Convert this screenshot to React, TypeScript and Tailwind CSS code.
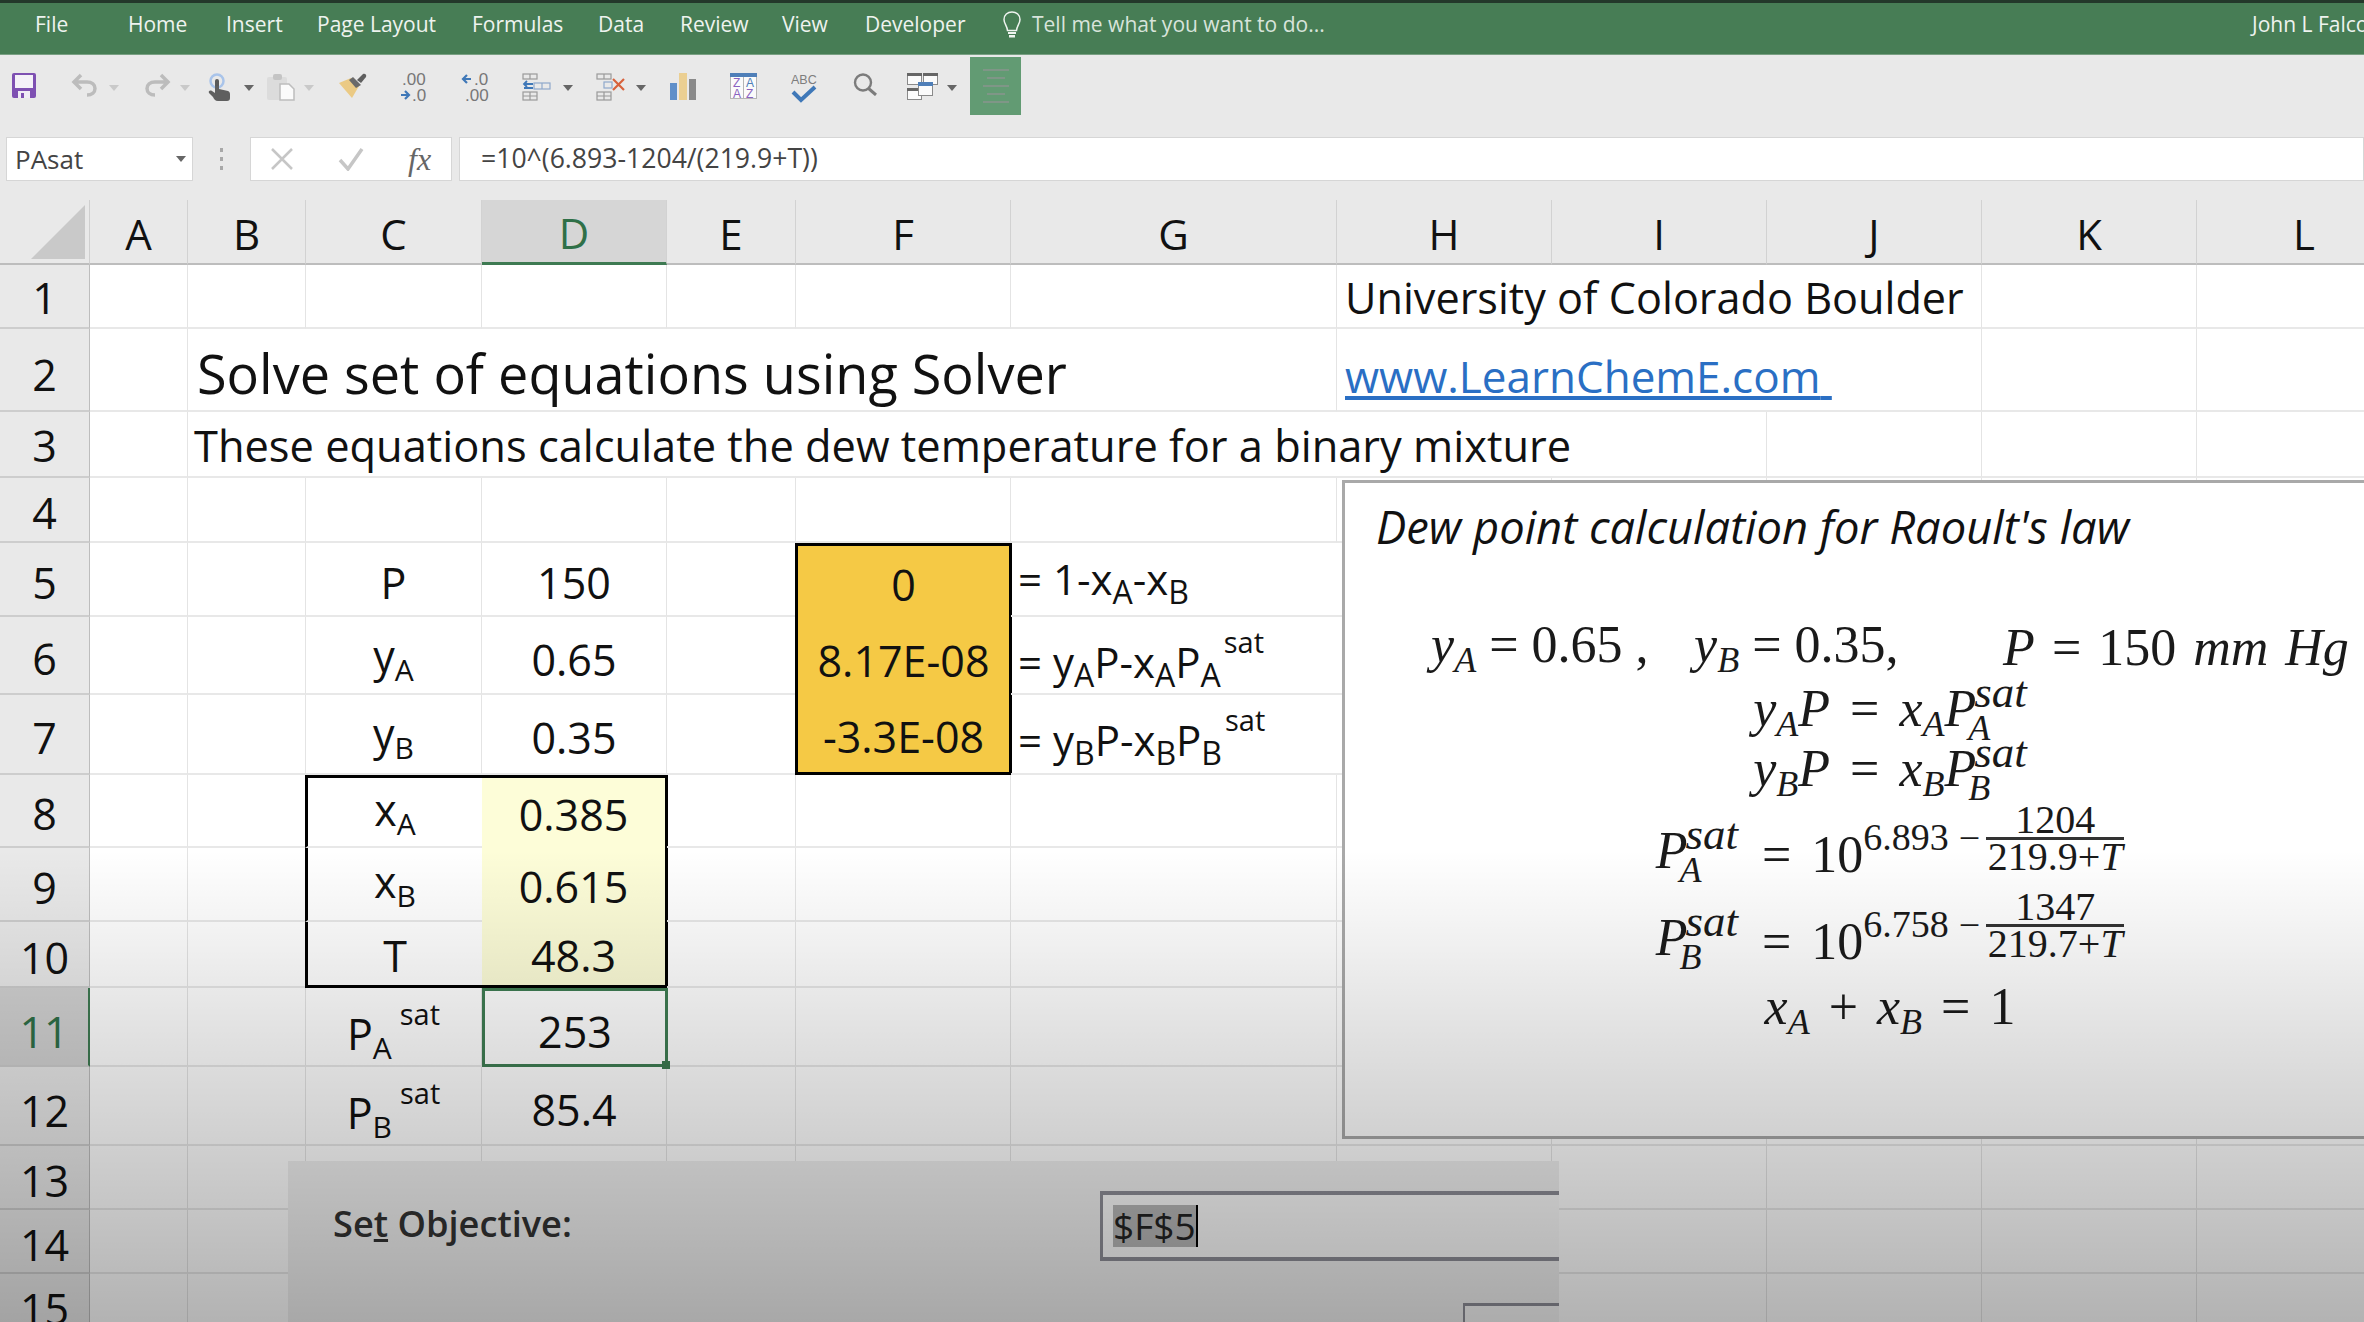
import React from "react";
import { twMerge } from "tailwind-merge";

const Arrow = ({ dark, x }: { dark?: boolean; x: string }) => (
  <svg width="12" height="8" viewBox="0 0 12 8" className={x}>
    <path d="M1 1h10L6 7z" fill={dark ? "#666" : "#c9c9c9"} />
  </svg>
);

const Save = () => (
  <svg width="24" height="25" viewBox="0 0 24 25" className="ml-[12px]">
    <rect width="24" height="25" rx="2" fill="#7e50b2" />
    <rect x="3" y="2" width="18" height="13" fill="#f4f1f8" />
    <rect x="6" y="18" width="12" height="7" fill="#f0ecf6" />
    <rect x="9" y="20" width="3" height="5" fill="#7e50b2" />
  </svg>
);
const Undo = ({ flip, x }: { flip?: boolean; x: string }) => (
  <svg width="27" height="24" viewBox="0 0 27 24" className={twMerge(x, flip ? "-scale-x-100" : "")}>
    <path d="M10 2 3 9l7 7M3 9h13c5 0 8 3 8 6.500s-3 6.500-8 6.500" fill="none" stroke="#bcbcbc" strokeWidth="3.500" />
  </svg>
);
const Hand = () => (
  <svg width="24" height="28" viewBox="0 0 24 28" className="ml-[16px]">
    <circle cx="10" cy="8" r="6.500" fill="none" stroke="#a9c4ea" strokeWidth="2.500" />
    <rect x="8" y="6" width="4" height="12" rx="2" fill="#5a5a5a" />
    <path d="M8 13h4v3l9 2c2 1 2 2 2 4v3c0 2-1 3-3 3h-9c-3 0-4-2-5-4l-4-4c-1-2 1-3 3-2l3 2z" fill="#5f5f5f" />
  </svg>
);
const Paste = () => (
  <svg width="28" height="28" viewBox="0 0 28 28" className="ml-[12px]">
    <rect x="0" y="4" width="20" height="23" rx="2" fill="#dcdcdc" />
    <rect x="6" y="1" width="9" height="6" rx="2" fill="#c4c4c4" />
    <path d="M13 11h9l5 5v11H13z" fill="#fbfbfb" stroke="#bdbdbd" strokeWidth="1.500" />
  </svg>
);
const Brush = () => (
  <svg width="30" height="26" viewBox="0 0 30 26" className="ml-[23px]">
    <path d="M1 10 13 5l8 8-7 12z" fill="#ebca84" />
    <path d="M15 4 23 12 18 15 11 7z" fill="#6a6a6a" />
    <path d="M19 7l6-6c2-1 4 1 3 3l-5 6z" fill="#5f5f5f" />
  </svg>
);
const Dec = ({ inc }: { inc?: boolean }) => (
  <svg width="28" height="28" viewBox="0 0 28 28" className={inc ? "ml-[33px]" : "ml-[32px]"}>
    {inc ? (
      <>
        <path d="M10 6H2m4-4L2 6l4 4" fill="none" stroke="#3f78b8" strokeWidth="2.200" />
        <text x="13" y="12" fontSize="17" fill="#777" fontFamily="Liberation Sans">.0</text>
        <text x="4" y="28" fontSize="17" fill="#777" fontFamily="Liberation Sans">.00</text>
      </>
    ) : (
      <>
        <text x="2" y="12" fontSize="17" fill="#777" fontFamily="Liberation Sans">.00</text>
        <path d="M1 22h8m-4-4 4 4-4 4" fill="none" stroke="#3f78b8" strokeWidth="2.200" />
        <text x="12" y="28" fontSize="17" fill="#777" fontFamily="Liberation Sans">.0</text>
      </>
    )}
  </svg>
);
const CellsIcon = ({ del, x }: { del?: boolean; x: string }) => (
  <svg width="30" height="28" viewBox="0 0 30 28" className={x}>
    <g fill="none" stroke="#9a9a9a" strokeWidth="1.200">
      <rect x="1" y="1" width="14" height="5" />
      <path d="M8 1v5" />
      <rect x="1" y="19" width="14" height="8" />
      <path d="M8 19v8M1 23h14" />
      {del ? <rect x="8" y="9" width="8" height="6" stroke="#8fa9cc" /> : <rect x="12" y="10" width="16" height="6" stroke="#8fa9cc" />}
      {!del && <path d="M20 10v6" stroke="#8fa9cc" />}
    </g>
    {del ? (
      <path d="M17 6l11 11M28 6 17 17" stroke="#d8623c" strokeWidth="2.200" />
    ) : (
      <path d="M11 11H2m3-3-3 3 3 3M11 15H2" fill="none" stroke="#3f78b8" strokeWidth="1.800" />
    )}
  </svg>
);
const Chart = () => (
  <svg width="26" height="27" viewBox="0 0 26 27" className="ml-[23px]">
    <rect x="0" y="10" width="7" height="17" fill="#5f8fc9" />
    <rect x="9" y="0" width="8" height="27" fill="#ebcf92" />
    <rect x="19" y="6" width="7" height="21" fill="#8a8a8a" />
  </svg>
);
const Sort = () => (
  <svg width="27" height="26" viewBox="0 0 27 26" className="ml-[34px]">
    <rect x="0.500" y="0.500" width="26" height="25" fill="#fbfbfb" stroke="#b5b5b5" />
    <rect width="27" height="4" fill="#4f7fb8" />
    <path d="M13.500 4v22" stroke="#b5b5b5" />
    <text x="3" y="14" fontSize="12" fill="#8a62c0" fontFamily="Liberation Sans">Z</text>
    <text x="3" y="25" fontSize="12" fill="#8a62c0" fontFamily="Liberation Sans">A</text>
    <text x="16" y="14" fontSize="12" fill="#4f7fb8" fontFamily="Liberation Sans">A</text>
    <text x="16" y="25" fontSize="12" fill="#8a62c0" fontFamily="Liberation Sans">Z</text>
  </svg>
);
const Spell = () => (
  <svg width="26" height="30" viewBox="0 0 26 30" className="ml-[34px]">
    <text x="0" y="11" fontSize="12.500" fill="#7d7d7d" fontFamily="Liberation Sans">ABC</text>
    <path d="M2 19l8 8L24 14" fill="none" stroke="#3f78b8" strokeWidth="4" />
  </svg>
);
const Search = () => (
  <svg width="24" height="23" viewBox="0 0 24 23" className="ml-[36px]">
    <circle cx="10" cy="9.500" r="8" fill="none" stroke="#7c7c7c" strokeWidth="2.400" />
    <path d="M15 15l8 7" stroke="#7c7c7c" strokeWidth="3" />
  </svg>
);
const Windows = () => (
  <svg width="31" height="27" viewBox="0 0 31 27" className="ml-[30px]">
    <rect x="0.500" y="0.500" width="14" height="11" fill="#fbfbfb" stroke="#8a8a8a" />
    <rect x="0" y="0" width="15" height="3" fill="#666" />
    <rect x="16.500" y="0.500" width="14" height="11" fill="#fbfbfb" stroke="#8a8a8a" />
    <rect x="16" y="0" width="15" height="3" fill="#666" />
    <rect x="0.500" y="15.500" width="14" height="11" fill="#fbfbfb" stroke="#8a8a8a" />
    <rect x="0" y="15" width="15" height="3" fill="#666" />
    <rect x="11.500" y="9.500" width="14" height="13" fill="#fbfbfb" stroke="#8a8a8a" />
    <rect x="11" y="9" width="15" height="4" fill="#4f7fb8" />
  </svg>
);

const Bulb = () => (
  <svg width="18" height="27" viewBox="0 0 18 27" className="shrink-0">
    <path d="M9 1c4.500 0 8 3 8 7.500 0 4-3 6-3.500 11h-9C4 14.500 1 12.500 1 8.500 1 4 4.500 1 9 1z" fill="none" stroke="#eef3ef" strokeWidth="1.500" />
    <path d="M5 21h8v2H5zM6 24h6v2.500H6z" fill="#eef3ef" />
  </svg>
);

const menu: [string, string][] = [
  ["File", "w-[128px] pl-[35px]"],
  ["Home", "w-[98px]"],
  ["Insert", "w-[91px]"],
  ["Page Layout", "w-[155px]"],
  ["Formulas", "w-[126px]"],
  ["Data", "w-[82px]"],
  ["Review", "w-[102px]"],
  ["View", "w-[83px]"],
  ["Developer", "w-[138px]"],
];

const S = ({ children }: { children: React.ReactNode }) => (
  <span className="text-[30px] align-[-9px]">{children}</span>
);
const S2 = ({ children }: { children: React.ReactNode }) => (
  <span className="text-[32px] align-[-9px]">{children}</span>
);
const Up = ({ children, cls }: { children: React.ReactNode; cls: string }) => (
  <span className={twMerge("text-[29px] align-[25px]", cls)}>{children}</span>
);

const cols = ["A", "B", "C", "D", "E", "F", "G", "H", "I", "J", "K", "L"];
const rowsN = Array.from({ length: 15 }, (_, i) => i + 1);

const Q = "border-r-0";
const BLK = "border-black";
const cells: Record<string, { c?: React.ReactNode; cls?: string }> = {
  B2: {
    c: <span className="text-[54px]">Solve set of equations using Solver</span>,
    cls: "justify-start pl-[9px] border-r-0",
  },
  C2: { cls: Q }, D2: { cls: Q }, E2: { cls: Q }, F2: { cls: Q },
  B3: {
    c: <span className="text-[43.400px]">These equations calculate the dew temperature for a binary mixture</span>,
    cls: "justify-start pl-[6px] pt-[3px] border-r-0",
  },
  C3: { cls: Q }, D3: { cls: Q }, E3: { cls: Q }, F3: { cls: Q }, G3: { cls: Q }, H3: { cls: Q },
  H1: {
    c: <span className="text-[43.200px]">University of Colorado Boulder</span>,
    cls: "justify-start pl-[8px] pt-[3px] border-r-0",
  },
  I1: { cls: Q },
  H2: {
    c: <span className="text-[44px] text-[#2a6fc4] underline">www.LearnChemE.com{"\u00a0"}</span>,
    cls: "justify-start pl-[8px] pt-[12px] border-r-0",
  },
  I2: { cls: Q },
  C5: { c: "P" },
  D5: { c: "150" },
  C6: { c: <>y<S>A</S></> },
  D6: { c: "0.65" },
  C7: { c: <>y<S>B</S></> },
  D7: { c: "0.35" },
  F5: { c: "0", cls: `-mx-[1px] bg-[#f5c945] border-[3px] border-b-0 ${BLK}` },
  F6: { c: "8.17E-08", cls: `-mx-[1px] bg-[#f5c945] border-x-[3px] border-y-0 ${BLK}` },
  F7: { c: "-3.3E-08", cls: `-mx-[1px] bg-[#f5c945] border-[3px] border-t-0 ${BLK}` },
  G5: { c: <span className="text-[42px]">= 1-x<S2>A</S2>-x<S2>B</S2></span>, cls: "justify-start pl-[7px] border-r-0" },
  G6: { c: <span className="text-[42px]">= y<S2>A</S2>P-x<S2>A</S2>P<S2>A</S2><Up cls="ml-[3px]">sat</Up></span>, cls: "justify-start pl-[7px] border-r-0" },
  G7: { c: <span className="text-[42px]">= y<S2>B</S2>P-x<S2>B</S2>P<S2>B</S2><Up cls="ml-[3px]">sat</Up></span>, cls: "justify-start pl-[7px] border-r-0" },
  C8: { c: <>x<S>A</S></>, cls: "-ml-[1px] border-l-[3px] border-l-black border-t-[3px] border-t-black border-r-0" },
  D8: { c: "0.385", cls: `-mr-[1px] bg-[#fdfdd8] border-r-[3px] border-t-[3px] border-b-0 ${BLK}` },
  C9: { c: <>x<S>B</S></>, cls: "-ml-[1px] border-l-[3px] border-l-black border-r-0" },
  D9: { c: "0.615", cls: "-mr-[1px] bg-[#fdfdd8] border-r-[3px] border-r-black border-b-0" },
  C10: { c: "T", cls: `-ml-[1px] border-l-[3px] border-b-[3px] border-r-0 ${BLK}` },
  D10: { c: "48.3", cls: `-mr-[1px] bg-[#fdfdd8] border-r-[3px] border-b-[3px] ${BLK}` },
  C11: { c: <>P<S>A</S><Up cls="ml-[8px]">sat</Up></> },
  D11: {
    c: (
      <>
        253
        <span className="absolute right-[-5px] bottom-[-5px] w-[8px] h-[8px] bg-[#3c7a50]" />
      </>
    ),
    cls: "-mr-[1px] relative border-[3px] border-[#3f7d53]",
  },
  C12: { c: <>P<S>B</S><Up cls="ml-[8px]">sat</Up></> },
  D12: { c: "85.4" },
};

const M = ({ children }: { children: React.ReactNode }) => <i className="italic">{children}</i>;

const Sub = ({ children, cls }: { children: React.ReactNode; cls?: string }) => (
  <span className={twMerge("italic text-[36px] align-[-10px]", cls)}>{children}</span>
);

const PSat = ({ s }: { s: string }) => (
  <span className="inline-flex items-start [word-spacing:0px]">
    <i className="leading-none">P</i>
    <span className="flex flex-col italic leading-none -ml-[2px]">
      <span className="text-[45px] leading-[36px] -mt-[9px]">sat</span>
      <span className="text-[36px] leading-[30px] -ml-[6px] mt-[3px]">{s}</span>
    </span>
  </span>
);

const Pow = ({ s, e, n, d }: { s: string; e: string; n: string; d: string }) => (
  <div className="h-[84px] flex items-center text-[52px] leading-none">
    <PSat s={s} />
    <span className="ml-[24px]">=</span>
    <span className="ml-[20px]">10</span>
    <span className="text-[38px] mb-[36px]">{e}</span>
    <span className="text-[38px] mb-[34px] ml-[10px]">−</span>
    <span className="flex flex-col items-center text-[40px] mb-[34px] ml-[6px] leading-[34px] w-[138px]">
      <span className="border-b-[3px] border-[#333] w-full text-center">{n}</span>
      <span>
        {d}
        <i>T</i>
      </span>
    </span>
  </div>
);

export default function App() {
  const rowPad = (r: number) => ([8, 9, 10].includes(r) ? "pt-[3px]" : [6, 11, 12].includes(r) ? "pt-[8px]" : "pt-[6px]");
  const headPad = (r: number) => (r === 2 || r === 11 || r === 12 ? "pt-[10px]" : r === 1 || r === 3 ? "pt-[3px]" : "pt-[6px]");
  return (
    <div className="relative w-[2364px] h-[1322px] overflow-hidden bg-white font-['Open_Sans',sans-serif] text-[#111]">
      {/* Title bar */}
      <div className="h-[55px] bg-[#477d55] border-t-[3px] border-[#23382a] border-b border-b-[#79a083] flex items-center pb-[8px] text-[21px] text-[#eef3ef] whitespace-nowrap overflow-hidden">
        {menu.map(([t, w]) => (
          <span key={t} className={twMerge(w, "shrink-0")}>
            {t}
          </span>
        ))}
        <Bulb />
        <span className="ml-[11px] w-[1220px] shrink-0 text-[#d8e4db]">Tell me what you want to do...</span>
        <span className="shrink-0">John L Falconer</span>
      </div>

      {/* Quick access */}
      <div className="h-[82px] bg-[#e9e9e9] flex items-start pt-[18px]">
        <Save />
        <Undo x="ml-[35px]" />
        <Arrow x="ml-[10px] mt-[11px]" />
        <Undo flip x="ml-[24px]" />
        <Arrow x="ml-[8px] mt-[11px]" />
        <Hand />
        <Arrow dark x="ml-[12px] mt-[11px]" />
        <Paste />
        <Arrow x="ml-[8px] mt-[11px]" />
        <Brush />
        <Dec />
        <Dec inc />
        <CellsIcon x="ml-[33px]" />
        <Arrow dark x="ml-[10px] mt-[11px]" />
        <CellsIcon del x="ml-[22px]" />
        <Arrow dark x="ml-[9px] mt-[11px]" />
        <Chart />
        <Sort />
        <Spell />
        <Search />
        <Windows />
        <Arrow dark x="ml-[8px] mt-[11px]" />
        <div className="ml-[12px] -mt-[16px] w-[51px] h-[58px] bg-[#629b73] flex flex-col items-center justify-center gap-[6px]">
          <span className="w-[26px] h-[2px] bg-[#7f9687]" />
          <span className="w-[18px] h-[2px] bg-[#7f9687]" />
          <span className="w-[26px] h-[2px] bg-[#7f9687]" />
          <span className="w-[18px] h-[2px] bg-[#7f9687]" />
          <span className="w-[26px] h-[2px] bg-[#7f9687]" />
        </div>
      </div>

      {/* Formula bar */}
      <div className="h-[44px] bg-[#e9e9e9] flex">
        <div className="ml-[6px] w-[187px] bg-white border border-[#d6d6d6] flex items-center pl-[8px] text-[26px] text-[#444]">
          <span className="w-[161px]">PAsat</span>
          <svg width="10" height="6" viewBox="0 0 10 6">
            <path d="M0 0h10L5 6z" fill="#666" />
          </svg>
        </div>
        <div className="w-[57px] flex flex-col items-center justify-center gap-[5px]">
          <span className="w-[3px] h-[4px] bg-[#a8a8a8]" />
          <span className="w-[3px] h-[4px] bg-[#a8a8a8]" />
          <span className="w-[3px] h-[4px] bg-[#a8a8a8]" />
        </div>
        <div className="w-[202px] bg-white border border-[#d6d6d6] flex items-center">
          <svg width="24" height="24" viewBox="0 0 24 24" className="ml-[19px]">
            <path d="M2 2l20 20M22 2 2 22" stroke="#c6c6c6" strokeWidth="2.500" />
          </svg>
          <svg width="26" height="24" viewBox="0 0 26 24" className="ml-[44px]">
            <path d="M2 13l8 9L24 2" fill="none" stroke="#c6c6c6" strokeWidth="3.500" />
          </svg>
          <span className="ml-[44px] font-['Liberation_Serif',serif] italic text-[32px] leading-none text-[#666]">fx</span>
        </div>
        <div className="ml-[7px] flex-1 bg-white border border-[#d6d6d6] flex items-center pl-[21px] text-[26.600px] text-[#444]">
          =10^(6.893-1204/(219.9+T))
        </div>
      </div>
      <div className="h-[19px] bg-[#e9e9e9]" />

      {/* Sheet */}
      <div className="grid grid-cols-[90px_98px_118px_176px_185px_129px_215px_326px_215px_215px_215px_215px_215px] grid-rows-[65px_64px_83px_66px_65px_74px_78px_80px_73px_74px_66px_79px_79px_64px_64px_64px] w-[2412px]">
        <div className="bg-[#e9e9e9] border-r border-b-2 border-r-[#cfcfcf] border-b-[#bdbdbd] flex items-end justify-end pr-[4px] pb-[4px]">
          <svg width="54" height="54" viewBox="0 0 54 54">
            <path d="M54 0v54H0z" fill="#c9c9c9" />
          </svg>
        </div>
        {cols.map((c) => (
          <div
            key={c}
            className={twMerge(
              "bg-[#e9e9e9] border-r border-b-2 border-r-[#d2d2d2] border-b-[#bdbdbd] flex items-center justify-center text-[42px] pt-[4px] leading-none",
              c === "D" && "bg-[#d6d6d6] text-[#2f7048] border-b-[3px] border-b-[#3e7a52]"
            )}
          >
            {c}
          </div>
        ))}
        {rowsN.map((r) => (
          <React.Fragment key={r}>
            <div
              className={twMerge(
                "bg-[#e9e9e9] border-r border-b-2 border-r-[#bdbdbd] border-b-[#cdcdcd] flex items-center justify-center text-[43px] leading-none",
                headPad(r),
                r === 11 && "bg-[#d2d2d2] text-[#2f7048] border-r-2 border-r-[#3e7a52]"
              )}
            >
              {r}
            </div>
            {cols.map((c) => {
              const d = cells[c + r];
              return (
                <div
                  key={c}
                  className={twMerge(
                    "flex items-center justify-center border-r border-b-2 border-r-[#e4e4e4] border-b-[#e8e8e8] text-[43px] leading-none whitespace-nowrap min-w-0",
                    rowPad(r),
                    d?.cls
                  )}
                >
                  {d?.c !== undefined && <span>{d.c}</span>}
                </div>
              );
            })}
          </React.Fragment>
        ))}
      </div>

      {/* Text box with equations */}
      <div className="absolute left-[1342px] top-[480px] w-[1096px] h-[659px] bg-white border-[3px] border-[#a9a9a9] flex flex-col items-center font-['Liberation_Serif',serif] text-[#1a1a1a] leading-none">
        <div className="self-start pl-[31px] pt-[20px] h-[135px] font-['Open_Sans',sans-serif] italic text-[45.300px] leading-[48px] text-[#111]">
          Dew point calculation for Raoult's law
        </div>
        <div className="h-[60px] flex items-center text-[52px] whitespace-pre">
          <span className="w-[263px]">
            <M>y</M>
            <Sub>A</Sub> = 0.65 ,
          </span>
          <span className="w-[309px]">
            <M>y</M>
            <Sub>B</Sub> = 0.35,
          </span>
          <span className="[word-spacing:4px]">
            <M>P</M> = 150 <M>mm Hg</M>
          </span>
        </div>
        <div className="mt-[5px] h-[60px] flex items-center text-[52px] whitespace-pre [word-spacing:7px]">
          <span>
            <M>y</M>
            <Sub>A</Sub>
            <M>P</M> = <M>x</M>
            <Sub>A</Sub>
            <PSat s="A" />
          </span>
        </div>
        <div className="h-[60px] flex items-center text-[52px] whitespace-pre [word-spacing:7px]">
          <span>
            <M>y</M>
            <Sub>B</Sub>
            <M>P</M> = <M>x</M>
            <Sub>B</Sub>
            <PSat s="B" />
          </span>
        </div>
        <div className="mt-[10px]">
          <Pow s="A" e="6.893" n="1204" d="219.9+" />
        </div>
        <div className="mt-[3px]">
          <Pow s="B" e="6.758" n="1347" d="219.7+" />
        </div>
        <div className="mt-[3px] h-[46px] flex items-center text-[52px] whitespace-pre [word-spacing:6px]">
          <span>
            <M>x</M>
            <Sub>A</Sub> + <M>x</M>
            <Sub>B</Sub> = 1
          </span>
        </div>
      </div>

      {/* Solver dialog */}
      <div className="absolute left-[288px] top-[1161px] w-[1271px] h-[161px] bg-[#f0f0f0] pt-[30px] flex flex-col">
        <div className="flex">
          <div className="w-[812px] pl-[45px] pt-[5px] text-[36.200px] font-semibold text-[#333]">
            Se<span className="underline">t</span> Objective:
          </div>
          <div className="w-[459px] h-[70px] bg-[#fafafa] border-y-[4px] border-l-[3px] border-[#8d8d96] flex items-center pl-[10px]">
            <span className="bg-[#b6b6b6] border-r-2 border-black text-[37px] leading-[42px] text-[#222]">$F$5</span>
          </div>
        </div>
        <div className="mt-[42px] ml-[1175px] h-[40px] w-[96px] bg-[#f6f6f6] border-t-[3px] border-l-[2px] border-[#8d8d96]" />
      </div>

      {/* Fade */}
      <div className="absolute left-0 right-0 top-[850px] bottom-0 bg-gradient-to-b from-transparent to-black/30 pointer-events-none" />
    </div>
  );
}
